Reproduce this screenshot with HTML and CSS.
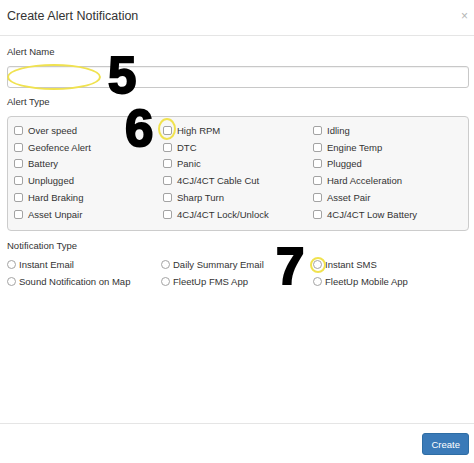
FILE: index.html
```html
<!DOCTYPE html>
<html>
<head>
  <link rel="stylesheet" href="styles.css">
</head>
<body>
  <div class="modal">
    <div class="modal__header">
      <h4 class="modal__title">Create Alert Notification</h4>
      <span class="modal__close">&times;</span>
    </div>

    <form class="modal__body" id="alert-form">
      <label class="field-label" for="alert-name">Alert Name</label>
      <input class="text-input" id="alert-name" type="text">

      <div class="field-label">Alert Type</div>
      <div class="check-box">
        <label class="check"><input type="checkbox"><span>Over speed</span></label>
        <label class="check"><input type="checkbox"><span>High RPM</span></label>
        <label class="check"><input type="checkbox"><span>Idling</span></label>
        <label class="check"><input type="checkbox"><span>Geofence Alert</span></label>
        <label class="check"><input type="checkbox"><span>DTC</span></label>
        <label class="check"><input type="checkbox"><span>Engine Temp</span></label>
        <label class="check"><input type="checkbox"><span>Battery</span></label>
        <label class="check"><input type="checkbox"><span>Panic</span></label>
        <label class="check"><input type="checkbox"><span>Plugged</span></label>
        <label class="check"><input type="checkbox"><span>Unplugged</span></label>
        <label class="check"><input type="checkbox"><span>4CJ/4CT Cable Cut</span></label>
        <label class="check"><input type="checkbox"><span>Hard Acceleration</span></label>
        <label class="check"><input type="checkbox"><span>Hard Braking</span></label>
        <label class="check"><input type="checkbox"><span>Sharp Turn</span></label>
        <label class="check"><input type="checkbox"><span>Asset Pair</span></label>
        <label class="check"><input type="checkbox"><span>Asset Unpair</span></label>
        <label class="check"><input type="checkbox"><span>4CJ/4CT Lock/Unlock</span></label>
        <label class="check"><input type="checkbox"><span>4CJ/4CT Low Battery</span></label>
      </div>

      <div class="field-label field-label--notify">Notification Type</div>
      <div class="radio-list">
        <label class="radio"><input type="radio" name="notify"><span>Instant Email</span></label>
        <label class="radio"><input type="radio" name="notify"><span>Daily Summary Email</span></label>
        <label class="radio"><input type="radio" name="notify"><span>Instant SMS</span></label>
        <label class="radio"><input type="radio" name="notify"><span>Sound Notification on Map</span></label>
        <label class="radio"><input type="radio" name="notify"><span>FleetUp FMS App</span></label>
        <label class="radio"><input type="radio" name="notify"><span>FleetUp Mobile App</span></label>
      </div>
    </form>

    <div class="modal__footer">
      <button class="btn-primary" type="button">Create</button>
    </div>
  </div>

  <!-- annotations drawn over the screenshot -->
  <div class="mark mark--name"></div>
  <div class="mark mark--rpm"></div>
  <div class="mark mark--sms"></div>
  <div class="step step--5">5</div>
  <div class="step step--6">6</div>
  <div class="step step--7">7</div>
</body>
</html>
```

FILE: styles.css
```css
html,
body {
  margin: 0;
  padding: 0;
  background: #ffffff;
}

body {
  position: relative;
  font-family: "Liberation Sans", Arial, sans-serif;
  color: #333333;
}

.modal {
  display: flex;
  flex-direction: column;
  height: 463px;
}

.modal__header {
  display: flex;
  align-items: center;
  justify-content: space-between;
  box-sizing: border-box;
  height: 36px;
  padding: 0 6px 3px 7px;
  border-bottom: 1px solid #e5e5e5;
}

.modal__title {
  margin: 0;
  font-size: 12.5px;
  font-weight: normal;
  color: #333333;
}

.modal__close {
  font-size: 12px;
  color: #b5b5b5;
}

.modal__body {
  display: flex;
  flex-direction: column;
  flex: 1;
  padding: 0 5px 0 7px;
  font-size: 9.5px;
}

.field-label {
  display: block;
  margin-top: 10px;
  line-height: 12px;
}

.text-input {
  box-sizing: border-box;
  height: 22px;
  margin: 8px 0 8px;
  border: 1px solid #c8c8c8;
  border-radius: 3px;
  box-shadow: inset 0 1px 1px rgba(0, 0, 0, 0.06);
}

.text-input + .field-label {
  margin-top: 0;
}

.check-box {
  display: grid;
  grid-template-columns: 149px 150px 1fr;
  margin-top: 8px;
  padding: 5px 6px 7px;
  border: 1px solid #cccccc;
  border-radius: 4px;
  background: #f7f7f7;
}

.check,
.radio {
  display: flex;
  align-items: center;
  height: 16.75px;
  white-space: nowrap;
}

.check input,
.radio input {
  appearance: none;
  box-sizing: border-box;
  flex: none;
  width: 9px;
  height: 9px;
  margin: 0;
  border: 1px solid #a3a3a3;
  background: #ffffff;
}

.check input {
  margin-right: 5px;
  border-radius: 2px;
}

.radio input {
  margin-right: 3px;
  border-radius: 50%;
}

.field-label--notify {
  margin-top: 9px;
}

.radio-list {
  display: grid;
  grid-template-columns: 154px 152px 1fr;
  margin-top: 5px;
}

.modal__footer {
  display: flex;
  justify-content: flex-end;
  padding: 9px 5px 8px;
  border-top: 1px solid #e5e5e5;
}

.btn-primary {
  height: 22px;
  padding: 0 8px;
  border: 1px solid #2e6da4;
  border-radius: 3px;
  background: #3a7ab8;
  color: #ffffff;
  font-family: "Liberation Sans", Arial, sans-serif;
  font-size: 9.5px;
}

.mark {
  position: absolute;
  box-sizing: border-box;
  border: 2.5px solid #f0e24f;
  border-radius: 50%;
}

.mark--name {
  top: 64px;
  left: 7px;
  width: 94px;
  height: 26px;
}

.mark--rpm {
  top: 118px;
  left: 158px;
  width: 18px;
  height: 22px;
}

.mark--sms {
  top: 257px;
  left: 310px;
  width: 16px;
  height: 16px;
}

.step {
  position: absolute;
  font-family: "Liberation Sans", Arial, sans-serif;
  font-size: 51px;
  font-weight: bold;
  line-height: 51px;
  color: #000000;
  -webkit-text-stroke: 2px #000000;
}

.step--5 {
  top: 50px;
  left: 108px;
}

.step--6 {
  top: 103px;
  left: 125px;
}

.step--7 {
  top: 241px;
  left: 276px;
}
```
